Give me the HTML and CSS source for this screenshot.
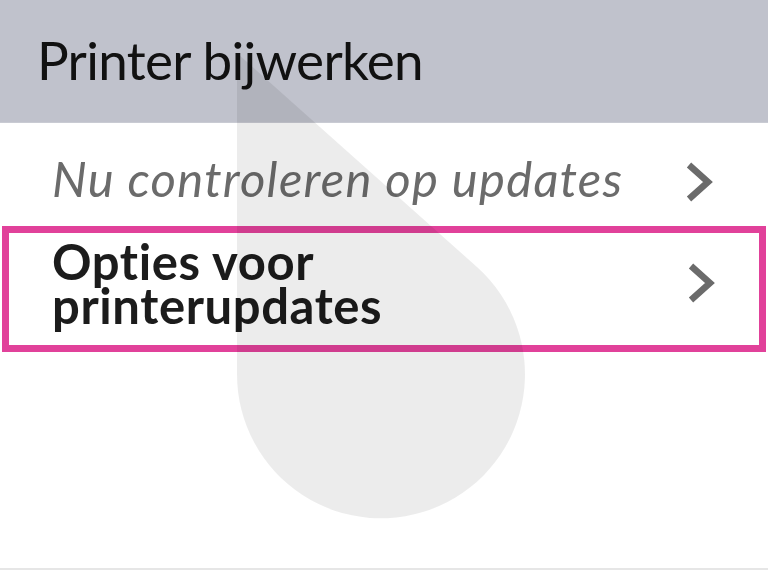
FILE: index.html
```html
<!DOCTYPE html>
<html lang="nl">
<head>
<meta charset="utf-8">
<title>Printer bijwerken</title>
<link rel="stylesheet" href="styles.css">
</head>
<body>
<div class="screen">
  <header class="header">Printer bijwerken</header>
  <div class="row row-check">
    <span class="label-italic">Nu controleren op updates</span>
    <svg class="chev" width="28" height="44" viewBox="0 0 28 44"><polyline points="4,5 23,22 4,39" /></svg>
  </div>
  <div class="row row-options">
    <span class="label-bold"><span class="line">Opties voor</span><span class="line">printerupdates</span></span>
    <svg class="chev" width="28" height="44" viewBox="0 0 28 44"><polyline points="4,5 23,22 4,39" /></svg>
  </div>
  <svg class="drop" width="768" height="570" viewBox="0 0 768 570" aria-hidden="true">
    <path d="M237,53 L477,267 A144,144 0 1 1 237,374 Z" />
  </svg>
</div>
</body>
</html>
```

FILE: styles.css
```css
html, body {
  margin: 0;
  padding: 0;
  background: #ffffff;
}
.screen {
  position: relative;
  width: 768px;
  height: 570px;
  overflow: hidden;
  font-family: Lato, "Open Sans", sans-serif;
  border-bottom: 2px solid #e6e6e6;
  box-sizing: border-box;
}
.header {
  box-sizing: border-box;
  height: 123px;
  padding: 33px 0 0 37px;
  background: #c0c2cc;
  border-bottom: 1px solid #c9cbd3;
  color: #111111;
  font-size: 53px;
  line-height: 53px;
  letter-spacing: -0.7px;
  font-weight: 400;
}
.row {
  display: flex;
  justify-content: space-between;
  align-items: flex-start;
  box-sizing: border-box;
}
.row-check {
  height: 103px;
  padding: 31px 55px 0 52px;
}
.row-check .chev {
  margin-top: 6px;
}
.label-italic {
  font-style: italic;
  font-size: 49px;
  line-height: 49px;
  letter-spacing: 1.25px;
  color: #6b6b6b;
}
.row-options {
  margin: 0 2px;
  height: 126px;
  border: 7px solid #e1419a;
  padding: 6px 44px 18px 43px;
  align-items: center;
}
.label-bold {
  display: flex;
  flex-direction: column;
  font-weight: 700;
  font-size: 49px;
  color: #1c1c1c;
  letter-spacing: 0.6px;
}
.label-bold .line {
  display: block;
  height: 44px;
  line-height: 44px;
}
.chev polyline {
  fill: none;
  stroke: #6b6b6b;
  stroke-width: 6.5;
  stroke-linejoin: miter;
  stroke-linecap: butt;
}
.drop {
  position: absolute;
  left: 0;
  top: 0;
  pointer-events: none;
}
.drop path {
  fill: rgba(0, 0, 0, 0.075);
}
```
